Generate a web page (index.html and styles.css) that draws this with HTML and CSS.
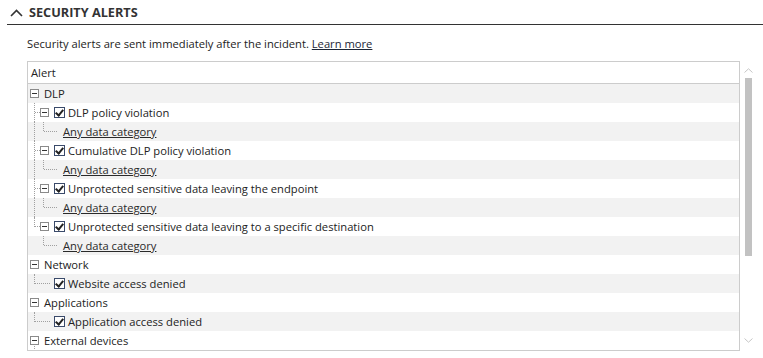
FILE: index.html
```html
<!DOCTYPE html>
<html>
<head>
<meta charset="utf-8">
<link rel="stylesheet" href="styles.css">
</head>
<body>
<div class="section">
  <div class="section-head">
    <svg class="chev" width="13" height="8" viewBox="0 0 13 8"><path d="M1 7 L6.5 1.5 L12 7" fill="none" stroke="#333" stroke-width="1.6"/></svg>
    <span class="title">SECURITY ALERTS</span>
  </div>
  <p class="desc">Security alerts are sent immediately after the incident. <a class="link" href="#">Learn more</a></p>
  <div class="table-wrap">
    <div class="table">
      <div class="thead">Alert</div>
      <div class="rows">
        <div class="row g"><span class="exp root"></span><span class="lbl">DLP</span></div>
        <div class="row w"><span class="ind tee"></span><span class="exp"></span><span class="cb"></span><span class="lbl">DLP policy violation</span></div>
        <div class="row g"><span class="ind v"></span><span class="ind2 elb"></span><a class="sub" href="#">Any data category</a></div>
        <div class="row w"><span class="ind tee"></span><span class="exp"></span><span class="cb"></span><span class="lbl">Cumulative DLP policy violation</span></div>
        <div class="row g"><span class="ind v"></span><span class="ind2 elb"></span><a class="sub" href="#">Any data category</a></div>
        <div class="row w"><span class="ind tee"></span><span class="exp"></span><span class="cb"></span><span class="lbl">Unprotected sensitive data leaving the endpoint</span></div>
        <div class="row g"><span class="ind v"></span><span class="ind2 elb"></span><a class="sub" href="#">Any data category</a></div>
        <div class="row w"><span class="ind elb"></span><span class="exp"></span><span class="cb"></span><span class="lbl">Unprotected sensitive data leaving to a specific destination</span></div>
        <div class="row g"><span class="ind"></span><span class="ind2 elb"></span><a class="sub" href="#">Any data category</a></div>
        <div class="row w"><span class="exp root"></span><span class="lbl">Network</span></div>
        <div class="row g"><span class="ind long elb"></span><span class="cb"></span><span class="lbl">Website access denied</span></div>
        <div class="row w"><span class="exp root"></span><span class="lbl">Applications</span></div>
        <div class="row g"><span class="ind long elb"></span><span class="cb"></span><span class="lbl">Application access denied</span></div>
        <div class="row w"><span class="exp root down"></span><span class="lbl">External devices</span></div>
      </div>
    </div>
    <div class="scrollbar">
      <svg class="arrow" width="9" height="5" viewBox="0 0 9 5"><path d="M0.5 4.5 L4.5 0.8 L8.5 4.5" fill="none" stroke="#c6c6c6" stroke-width="1"/></svg>
      <div class="thumb"></div>
      <div class="track"></div>
      <svg class="arrow" width="9" height="5" viewBox="0 0 9 5"><path d="M0.5 0.5 L4.5 4.2 L8.5 0.5" fill="none" stroke="#c6c6c6" stroke-width="1"/></svg>
    </div>
  </div>
</div>
</body>
</html>
```
FILE: styles.css
```css
html, body {
  margin: 0;
  padding: 0;
  background: #fff;
}
body {
  font-family: "Open Sans", "Noto Sans", sans-serif;
  font-size: 11.2px;
  color: #222;
}
.section {
  width: 763px;
}
.section-head {
  display: flex;
  align-items: center;
  height: 24px;
  margin-left: 7px;
  border-bottom: 1px solid #333;
}
.chev {
  margin-left: 3px;
  margin-top: 2px;
}
.title {
  margin-left: 6px;
  font-weight: bold;
  font-size: 12.7px;
  color: #333;
  line-height: 24px;
}
.desc {
  margin: 0;
  padding: 11px 0 0 27px;
  height: 25px;
  line-height: 16px;
}
.link {
  color: #1d2636;
  text-decoration: underline;
}
.table-wrap {
  display: flex;
  margin-left: 27px;
}
.table {
  width: 711px;
  height: 288px;
  border: 1px solid #cccccc;
  overflow: hidden;
}
.thead {
  height: 21px;
  line-height: 21px;
  padding-left: 3px;
  border-bottom: 1px solid #cccccc;
}
.row {
  display: flex;
  align-items: center;
  height: 19px;
  white-space: nowrap;
}
.row.g { background: #f2f2f2; }
.row.w { background: #fff; }
.exp {
  position: relative;
  flex: none;
  width: 7px;
  height: 7px;
  border: 1px solid #8a8a8a;
  background: #fff;
}
.exp::after {
  content: "";
  position: absolute;
  left: 1px;
  top: 3px;
  width: 5px;
  height: 1px;
  background: #333;
}
.exp.root {
  margin-left: 2px;
  margin-right: 5px;
}
.exp.down::before {
  content: "";
  position: absolute;
  left: 3px;
  top: 9px;
  height: 5px;
  border-left: 1px dotted #a0a0a0;
}
.ind {
  position: relative;
  flex: none;
  width: 12px;
  height: 19px;
}
.ind.long {
  width: 25px;
}
.ind2 {
  position: relative;
  flex: none;
  width: 23px;
  height: 19px;
}
.ind.v::before,
.ind.tee::before {
  content: "";
  position: absolute;
  left: 6px;
  top: 0;
  height: 19px;
  border-left: 1px dotted #a0a0a0;
}
.ind.elb::before,
.ind2.elb::before {
  content: "";
  position: absolute;
  left: 6px;
  top: 0;
  height: 10px;
  border-left: 1px dotted #a0a0a0;
}
.ind.tee::after,
.ind.elb::after {
  content: "";
  position: absolute;
  left: 7px;
  top: 9px;
  right: 0;
  border-top: 1px dotted #a0a0a0;
}
.ind.long.elb::after {
  right: 3px;
}
.ind2.elb::before {
  left: 3px;
  height: 9px;
}
.ind2.elb::after {
  content: "";
  position: absolute;
  left: 4px;
  top: 9px;
  width: 13px;
  border-top: 1px dotted #a0a0a0;
}
.cb {
  position: relative;
  flex: none;
  width: 9px;
  height: 9px;
  border: 1px solid #3a4a6a;
  background: #fff;
  margin-left: 5px;
  margin-right: 3px;
}
.ind.long + .cb {
  margin-left: 1px;
}
.cb::after {
  content: "";
  position: absolute;
  left: 2px;
  top: 0px;
  width: 3px;
  height: 6px;
  border-right: 2px solid #222;
  border-bottom: 2px solid #222;
  transform: rotate(40deg);
}
.lbl {
  line-height: 19px;
}
.sub {
  color: #2a2a2a;
  text-decoration: underline;
  line-height: 19px;
}
.scrollbar {
  display: flex;
  flex-direction: column;
  align-items: flex-start;
  width: 23px;
  height: 290px;
}
.arrow {
  margin-left: 4px;
  margin-top: 7px;
  flex: none;
}
.thumb {
  margin-top: 5px;
  margin-left: 5px;
  width: 7px;
  height: 178px;
  background: #c2c2c2;
  flex: none;
}
.track {
  flex: 1;
}
.arrow:last-child {
  margin-top: 0;
  margin-bottom: 8px;
}
```
